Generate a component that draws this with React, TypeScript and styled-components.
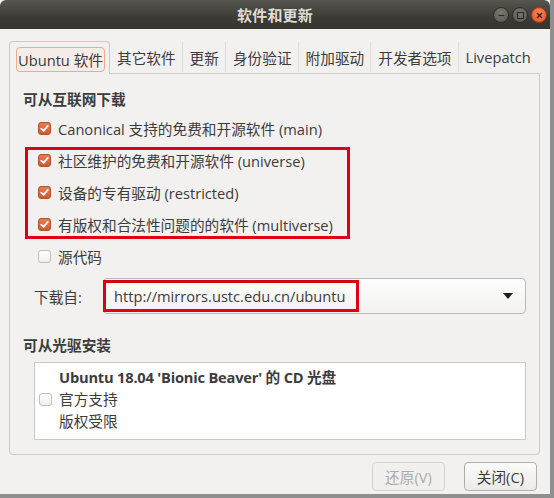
import React from 'react';
import styled, { createGlobalStyle } from 'styled-components';

const GlobalStyle = createGlobalStyle`
  html, body {
    margin: 0;
    padding: 0;
    background: #8f8f8f;
  }
  body {
    font-family: "Open Sans", "Noto Sans CJK SC", sans-serif;
    font-size: 14.67px;
    color: #3c3c3c;
  }
`;

const Window = styled.div`
  width: 550px;
  height: 494px;
  display: flex;
  flex-direction: column;
  background: #f2f1f0;
  box-sizing: border-box;
`;

const TitleBar = styled.div`
  height: 29px;
  flex-shrink: 0;
  display: flex;
  align-items: center;
  justify-content: center;
  position: relative;
  background: linear-gradient(#56554f, #3c3b37 60%, #35342f);
  border-radius: 6px 6px 0 0;
`;

const Title = styled.div`
  color: #dfdbd2;
  font-weight: bold;
  font-size: 15px;
  letter-spacing: 0.2px;
`;

const Controls = styled.div`
  position: absolute;
  right: 3px;
  top: 7px;
  display: flex;
  gap: 3px;
`;

const CtlButton = styled.div<{ $close?: boolean }>`
  width: 16px;
  height: 16px;
  border-radius: 50%;
  display: flex;
  align-items: center;
  justify-content: center;
  box-sizing: border-box;
  border: 1px solid ${(p) => (p.$close ? '#a53a1c' : '#2e2d29')};
  background: ${(p) =>
    p.$close
      ? 'radial-gradient(circle at 50% 35%, #f7875a, #e5531f)'
      : 'radial-gradient(circle at 50% 35%, #7a7972, #58574f)'};
`;

const Body = styled.div`
  flex: 1;
  display: flex;
  flex-direction: column;
  padding: 12px 10px 0 9px;
`;

const TabStrip = styled.div`
  display: flex;
  height: 32px;
  position: relative;
  z-index: 1;
`;

const Tab = styled.div<{ $active?: boolean; $last?: boolean }>`
  display: flex;
  align-items: center;
  box-sizing: border-box;
  white-space: nowrap;
  ${(p) =>
    p.$active
      ? `
    padding: 0 4px 0 6px;
    border: 1px solid #cdc9c3;
    border-bottom: none;
    border-radius: 4px 4px 0 0;
    background: #f2f1f0;
    height: 33px;
    margin-bottom: -1px;
  `
      : `
    padding: 0 6px 0 7px;
    ${p.$last ? '' : 'border-right: 1px solid #e0ddd9;'}
    margin-top: 1px;
    height: 30px;
  `}
`;

const FocusRing = styled.span`
  display: inline-flex;
  align-items: center;
  height: 25px;
  padding: 0 1px;
  margin-top: 2px;
  border: 1px solid #f3a98c;
  border-radius: 4px;
  background: #f6ece7;
  box-sizing: border-box;
`;

const Panel = styled.div`
  border: 1px solid #cdc9c3;
  border-radius: 0 0 4px 4px;
  height: 382px;
  box-sizing: border-box;
  padding: 15px 13px 0 13px;
  display: flex;
  flex-direction: column;
`;

const SectionTitle = styled.div<{ $gap?: number }>`
  font-weight: bold;
  line-height: 20px;
  height: 20px;
  margin-top: ${(p) => p.$gap ?? 0}px;
`;

const CheckRow = styled.label`
  display: flex;
  align-items: center;
  height: 32px;
  padding-left: 15px;
  gap: 7px;
  white-space: nowrap;
`;

const FirstRow = styled(CheckRow)`
  margin-top: 3px;
`;

const Box = styled.span<{ $checked?: boolean }>`
  width: 13px;
  height: 13px;
  flex-shrink: 0;
  box-sizing: border-box;
  border-radius: 3px;
  display: flex;
  align-items: center;
  justify-content: center;
  border: 1px solid ${(p) => (p.$checked ? '#b5512a' : '#c3bfb9')};
  background: ${(p) =>
    p.$checked ? 'linear-gradient(#e67b4f, #d05c2d)' : 'linear-gradient(#ffffff, #f0efed)'};
`;

const Highlighted = styled.div`
  position: relative;
  &::after {
    content: '';
    position: absolute;
    top: 3px;
    left: 2px;
    width: 325px;
    height: 92px;
    box-sizing: border-box;
    border: 3px solid #dc0016;
    pointer-events: none;
  }
`;

const SourceRow = styled.div`
  display: flex;
  align-items: center;
  margin-top: 6px;
  padding-left: 11px;
`;

const SourceLabel = styled.div`
  width: 69px;
  flex-shrink: 0;
`;

const Combo = styled.div`
  position: relative;
  flex: 1;
  height: 36px;
  box-sizing: border-box;
  border: 1px solid #bdb9b3;
  border-radius: 4px;
  background: linear-gradient(#fdfdfd, #f3f2f1);
  display: flex;
  align-items: center;
  padding: 0 12px 0 10px;
  justify-content: space-between;
  &::after {
    content: '';
    position: absolute;
    top: 1px;
    left: -1px;
    width: 256px;
    height: 32px;
    box-sizing: border-box;
    border: 3px solid #dc0016;
    pointer-events: none;
  }
`;

const Arrow = styled.span`
  width: 0;
  height: 0;
  border-left: 5px solid transparent;
  border-right: 5px solid transparent;
  border-top: 6px solid #1e1e1e;
`;

const DiscList = styled.div`
  margin: 7px 0 0 11px;
  height: 78px;
  box-sizing: border-box;
  border: 1px solid #cbc8c3;
  background: #ffffff;
  display: flex;
  align-items: center;
  padding: 0 0 4px 4px;
  gap: 7px;
`;

const DiscLines = styled.div`
  display: flex;
  flex-direction: column;
  line-height: 22px;
`;

const DiscName = styled.div`
  font-weight: bold;
  letter-spacing: -0.2px;
`;

const Footer = styled.div`
  display: flex;
  justify-content: flex-end;
  gap: 19px;
  padding: 7px 3px 0 0;
`;

const Button = styled.button<{ $disabled?: boolean }>`
  font: inherit;
  height: 29px;
  box-sizing: border-box;
  border-radius: 4px;
  padding: 0 12px;
  border: 1px solid ${(p) => (p.$disabled ? '#d6d3ce' : '#b3afa8')};
  color: ${(p) => (p.$disabled ? '#aeaba6' : '#3c3c3c')};
  background: ${(p) => (p.$disabled ? '#f1f0ef' : 'linear-gradient(#fbfbfb, #ecebe9)')};
`;

const Check = () => (
  <svg width="9" height="9" viewBox="0 0 9 9">
    <path d="M1.3 4.6 L3.6 6.9 L7.8 1.9" fill="none" stroke="#ffffff" strokeWidth="1.8" strokeLinecap="round" strokeLinejoin="round" />
  </svg>
);

const tabs = ['其它软件', '更新', '身份验证', '附加驱动', '开发者选项', 'Livepatch'];

export default function App() {
  return (
    <>
      <GlobalStyle />
      <Window>
        <TitleBar>
          <Title>软件和更新</Title>
          <Controls>
            <CtlButton>
              <svg width="9" height="9" viewBox="0 0 9 9">
                <path d="M1.5 4.5 H7.5" stroke="#2f2e2a" strokeWidth="1.3" />
              </svg>
            </CtlButton>
            <CtlButton>
              <svg width="9" height="9" viewBox="0 0 9 9">
                <rect x="1.5" y="1.5" width="6" height="6" fill="none" stroke="#2f2e2a" strokeWidth="1.2" />
              </svg>
            </CtlButton>
            <CtlButton $close>
              <svg width="9" height="9" viewBox="0 0 9 9">
                <path d="M2 2 L7 7 M7 2 L2 7" stroke="#3a1a0e" strokeWidth="1.4" />
              </svg>
            </CtlButton>
          </Controls>
        </TitleBar>
        <Body>
          <TabStrip>
            <Tab $active>
              <FocusRing>Ubuntu 软件</FocusRing>
            </Tab>
            {tabs.map((t, i) => (
              <Tab key={t} $last={i === tabs.length - 1}>
                {t}
              </Tab>
            ))}
          </TabStrip>
          <Panel>
            <SectionTitle>可从互联网下载</SectionTitle>
            <FirstRow>
              <Box $checked>
                <Check />
              </Box>
              Canonical 支持的免费和开源软件 (main)
            </FirstRow>
            <Highlighted>
              <CheckRow>
                <Box $checked>
                  <Check />
                </Box>
                社区维护的免费和开源软件 (universe)
              </CheckRow>
              <CheckRow>
                <Box $checked>
                  <Check />
                </Box>
                设备的专有驱动 (restricted)
              </CheckRow>
              <CheckRow>
                <Box $checked>
                  <Check />
                </Box>
                有版权和合法性问题的的软件 (multiverse)
              </CheckRow>
            </Highlighted>
            <CheckRow>
              <Box />
              源代码
            </CheckRow>
            <SourceRow>
              <SourceLabel>下载自:</SourceLabel>
              <Combo>
                <span>http://mirrors.ustc.edu.cn/ubuntu</span>
                <Arrow />
              </Combo>
            </SourceRow>
            <SectionTitle $gap={21}>可从光驱安装</SectionTitle>
            <DiscList>
              <Box />
              <DiscLines>
                <DiscName>Ubuntu 18.04 'Bionic Beaver' 的 CD 光盘</DiscName>
                <div>官方支持</div>
                <div>版权受限</div>
              </DiscLines>
            </DiscList>
          </Panel>
          <Footer>
            <Button $disabled>还原(V)</Button>
            <Button>关闭(C)</Button>
          </Footer>
        </Body>
      </Window>
    </>
  );
}
